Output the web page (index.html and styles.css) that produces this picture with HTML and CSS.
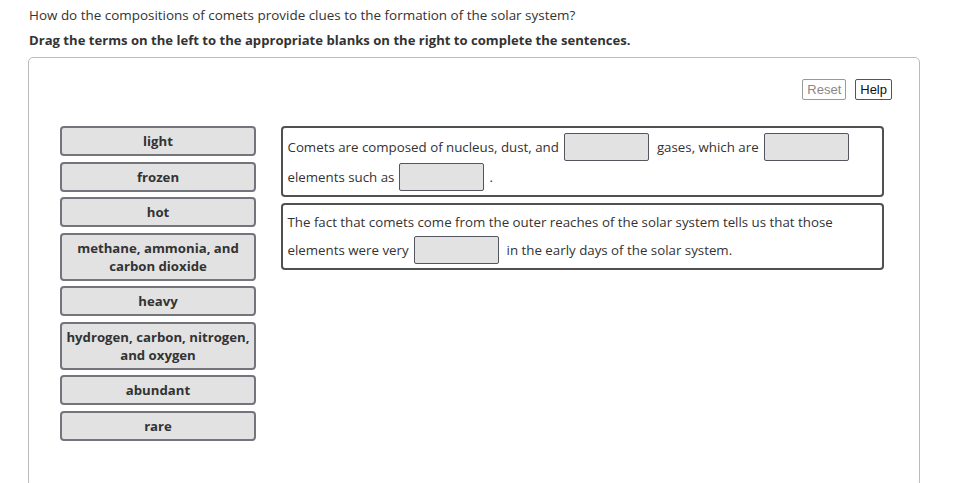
FILE: index.html
```html
<!DOCTYPE html>
<html lang="en">
<head>
    <meta charset="UTF-8">
    <title>Comets and the Solar System</title>
    <link rel="stylesheet" href="styles.css">
</head>
<body>
    <p class="question">How do the compositions of comets provide clues to the formation of the solar system?</p>
    <p class="instructions">Drag the terms on the left to the appropriate blanks on the right to complete the sentences.</p>

    <div class="container">
        <div class="toolbar">
            <button class="tool-btn" disabled>Reset</button>
            <button class="tool-btn">Help</button>
        </div>

        <div class="workspace">
            <div class="terms">
                <div class="term">light</div>
                <div class="term">frozen</div>
                <div class="term">hot</div>
                <div class="term">methane, ammonia, and<br>carbon dioxide</div>
                <div class="term">heavy</div>
                <div class="term">hydrogen, carbon, nitrogen,<br>and oxygen</div>
                <div class="term">abundant</div>
                <div class="term">rare</div>
            </div>

            <div class="sentences">
                <div class="sentence">
                    <div class="line">
                        <span>Comets are composed of nucleus, dust, and</span>
                        <span class="blank"></span>
                        <span>gases, which are</span>
                        <span class="blank"></span>
                    </div>
                    <div class="line">
                        <span>elements such as</span>
                        <span class="blank"></span>
                        <span class="stop">.</span>
                    </div>
                </div>
                <div class="sentence">
                    <div class="line short">
                        <span>The fact that comets come from the outer reaches of the solar system tells us that those</span>
                    </div>
                    <div class="line">
                        <span>elements were very</span>
                        <span class="blank"></span>
                        <span>in the early days of the solar system.</span>
                    </div>
                </div>
            </div>
        </div>
    </div>
</body>
</html>
```

FILE: styles.css
```css
body {
    font-family: "Open Sans", "Noto Sans", sans-serif;
    font-size: 13.3px;
    color: #333;
    margin: 0;
    padding: 0;
    background: #fff;
}

.question {
    margin: 0;
    padding: 6px 0 0 29px;
    line-height: 18px;
    font-size: 13.45px;
}

.instructions {
    margin: 0;
    padding: 7px 0 0 29px;
    line-height: 18px;
    font-weight: bold;
    font-size: 13.1px;
}

.container {
    margin: 8px 0 0 28px;
    width: 892px;
    height: 430px;
    border: 1px solid #bbb;
    border-radius: 5px;
    padding: 21px 27px 0 31px;
    box-sizing: border-box;
}

.toolbar {
    display: flex;
    justify-content: flex-end;
    gap: 9px;
}

.tool-btn {
    font-family: "Liberation Sans", Arial, sans-serif;
    font-size: 13px;
    height: 21px;
    padding: 0 4px;
    background: #fff;
    color: #111;
    border: 1px solid #555;
    border-radius: 2px;
}

.tool-btn:disabled {
    color: #888;
    border-color: #999;
}

.workspace {
    display: flex;
    gap: 25px;
    margin-top: 26px;
    padding-right: 8px;
}

.terms {
    width: 196px;
    flex-shrink: 0;
    display: flex;
    flex-direction: column;
    gap: 5.5px;
}

.term {
    background: #e2e2e2;
    border: 2px solid #74747c;
    border-radius: 4px;
    padding: 4px 0;
    text-align: center;
    font-weight: bold;
    font-size: 13.2px;
    line-height: 18px;
}

.sentences {
    flex: 1;
    display: flex;
    flex-direction: column;
    gap: 6px;
}

.sentence {
    border: 2px solid #505050;
    border-radius: 4px;
    padding: 3.5px 4.5px;
}

.line {
    display: flex;
    align-items: center;
    height: 30px;
    white-space: nowrap;
}

.line.short {
    height: 26px;
}

.blank {
    display: inline-block;
    width: 83px;
    height: 26px;
    margin: 0 8px 0 5px;
    background: #e2e2e2;
    border: 1px solid #55555f;
    border-radius: 2px;
}

.stop {
    margin-left: -3px;
}
```
